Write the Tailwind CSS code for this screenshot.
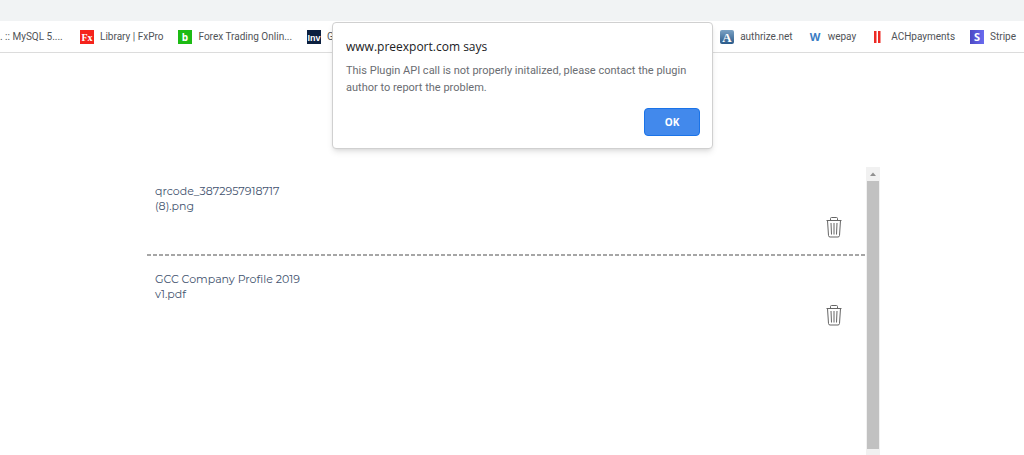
<!DOCTYPE html>
<html lang="en">
<head>
    <meta charset="UTF-8">
    <meta name="viewport" content="width=device-width, initial-scale=1.0">
    <title>www.preexport.com</title>
    <script src="https://cdn.jsdelivr.net/npm/@tailwindcss/browser@4"></script>
</head>
<body class="relative h-screen flex flex-col overflow-hidden bg-white font-[Roboto,sans-serif] text-[#5f6368]">

    <!-- Toolbar edge -->
    <div class="h-[21px] shrink-0 bg-[#f1f3f4]"></div>

    <!-- Bookmarks bar -->
    <nav class="h-8 shrink-0 flex items-center justify-between border-b border-[#dcdcdc] pr-2 text-[10px] whitespace-nowrap text-[#505357]">
        <div class="flex items-center gap-[15px]">
            <a href="#" class="w-[65px]">. :: MySQL 5....</a>
            <a href="#" class="flex items-center gap-1.5">
                <svg width="14" height="14" viewBox="0 0 14 14"><rect width="14" height="14" fill="#f5231c"/><text x="7" y="11" text-anchor="middle" font-family="Liberation Serif" font-weight="bold" font-size="10" fill="#fff">Fx</text></svg>
                Library | FxPro
            </a>
            <a href="#" class="flex items-center gap-1.5">
                <svg width="14" height="14" viewBox="0 0 14 14"><rect width="14" height="14" fill="#1dbb14"/><text x="7" y="11" text-anchor="middle" font-family="Open Sans" font-weight="bold" font-size="10" fill="#fff">b</text></svg>
                Forex Trading Onlin...
            </a>
            <a href="#" class="flex items-center gap-1.5">
                <svg width="14" height="14" viewBox="0 0 14 14"><rect width="14" height="14" fill="#0b1f3f"/><text x="7" y="11" text-anchor="middle" font-family="Liberation Sans" font-weight="bold" font-size="9" fill="#fff">Inv</text></svg>
                G
            </a>
        </div>
        <div class="flex items-center gap-[15px]">
            <a href="#" class="flex items-center gap-1.5">
                <svg width="14" height="14" viewBox="0 0 14 14"><defs><linearGradient id="auth" x2="0" y2="1"><stop stop-color="#7ba2c4"/><stop offset="1" stop-color="#2a5a8a"/></linearGradient></defs><rect width="14" height="14" rx="2" fill="url(#auth)"/><text x="7" y="12" text-anchor="middle" font-family="Liberation Serif" font-weight="bold" font-size="13" fill="#fff">A</text></svg>
                authrize.net
            </a>
            <a href="#" class="flex items-center gap-1.5">
                <svg width="14" height="14" viewBox="0 0 14 14"><text x="7" y="11" text-anchor="middle" font-family="Open Sans" font-weight="bold" font-size="11" fill="#3a7cc4">W</text></svg>
                wepay
            </a>
            <a href="#" class="flex items-center gap-1.5">
                <svg width="14" height="14" viewBox="0 0 14 14" fill="#ed2a24"><rect x="3" y="1" width="2.500" height="12"/><rect x="7" y="1" width="2.500" height="12"/></svg>
                ACHpayments
            </a>
            <a href="#" class="flex items-center gap-1.5">
                <svg width="14" height="14" viewBox="0 0 14 14"><defs><linearGradient id="stripe"><stop stop-color="#4c48c4"/><stop offset="1" stop-color="#6a6cf0"/></linearGradient></defs><rect width="14" height="14" fill="url(#stripe)"/><text x="7" y="11" text-anchor="middle" font-family="Open Sans" font-weight="bold" font-size="11" fill="#fff">S</text></svg>
                Stripe
            </a>
        </div>
    </nav>

    <!-- Uploaded files -->
    <main class="flex-1 min-h-0 flex pt-[114px] pl-[147px] pr-36">
        <ul class="flex-1 pt-px font-[Montserrat,Inter,sans-serif] text-[11px] leading-[15px] text-[#42526e]">
            <li class="h-22 flex flex-col">
                <div class="flex-1 flex justify-between items-start pl-2 pr-6">
                    <p class="w-40 pt-4">qrcode_3872957918717<br>(8).png</p>
                    <button aria-label="Delete qrcode_3872957918717 (8).png" class="mt-12">
                        <svg width="16" height="22" viewBox="0 0 16 22" fill="none" stroke="#666" stroke-width="1"><path d="M.5 4.500h15M4.500 4V2.500Q4.500 1.500 5.500 1.500h5Q11.500 1.500 11.500 2.500V4M1.500 4.500l1 15q.1 1.500 1.500 1.500h8q1.400 0 1.500-1.500l1-15M5 7l.5 11.500M8 7v11.500M11 7l-.5 11.500"/></svg>
                    </button>
                </div>
                <div class="h-[2px] bg-[repeating-linear-gradient(90deg,#a6a6a6_0_4px,#fff_4px_6px)]"></div>
            </li>
            <li class="h-22 flex flex-col">
                <div class="flex-1 flex justify-between items-start pl-2 pr-6">
                    <p class="w-40 pt-4">GCC Company Profile 2019<br>v1.pdf</p>
                    <button aria-label="Delete GCC Company Profile 2019 v1.pdf" class="mt-12">
                        <svg width="16" height="22" viewBox="0 0 16 22" fill="none" stroke="#666" stroke-width="1"><path d="M.5 4.500h15M4.500 4V2.500Q4.500 1.500 5.500 1.500h5Q11.500 1.500 11.500 2.500V4M1.500 4.500l1 15q.1 1.500 1.500 1.500h8q1.400 0 1.500-1.500l1-15M5 7l.5 11.500M8 7v11.500M11 7l-.5 11.500"/></svg>
                    </button>
                </div>
            </li>
        </ul>
        <!-- Scrollbar -->
        <div class="w-3.5 flex flex-col items-center bg-[#f1f1f1] pb-1.5">
            <svg width="14" height="14" viewBox="0 0 14 14"><path d="M4 9l3-3.500L10 9z" fill="#909090"/></svg>
            <div class="flex-1 w-3 bg-[#c1c1c1]"></div>
        </div>
    </main>

    <!-- Alert -->
    <dialog open class="absolute top-[22px] left-[21px] right-0 mx-auto w-[381px] rounded-sm border border-[#d0d0d0] bg-white p-3 pt-4 pl-[13px] shadow-md">
        <h1 class="font-['Open_Sans',sans-serif] text-xs leading-4 text-[#202124]">www.preexport.com says</h1>
        <p class="mt-[7px] text-[11px] leading-[17px] text-[#6a6d72]">This Plugin API call is not properly initalized, please contact the plugin<br>author to report the problem.</p>
        <div class="mt-3 flex justify-end">
            <button class="h-7 w-14 rounded-sm border border-[#1a73e8] bg-[#4289ec] font-['Open_Sans',sans-serif] text-[10px] font-bold text-white">OK</button>
        </div>
    </dialog>
</body>
</html>
